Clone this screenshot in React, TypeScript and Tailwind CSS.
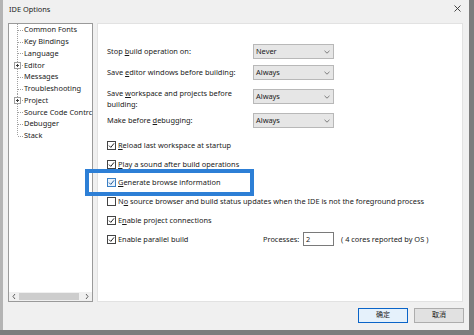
import type { ReactNode } from 'react';

const treeItems = [
  { label: 'Common Fonts', plus: false },
  { label: 'Key Bindings', plus: false },
  { label: 'Language', plus: false },
  { label: 'Editor', plus: true },
  { label: 'Messages', plus: false },
  { label: 'Troubleshooting', plus: false },
  { label: 'Project', plus: true },
  { label: 'Source Code Contrc', plus: false },
  { label: 'Debugger', plus: false },
  { label: 'Stack', plus: false },
];

function TreeRow({ label, plus, last }: { label: string; plus: boolean; last: boolean }) {
  return (
    <div className="flex h-[11.75px] items-center">
      <svg width="15" height="12" viewBox="0 0 15 12" className="shrink-0">
        <line x1="8.5" y1="0" x2="8.5" y2={last ? 6 : 12} stroke="#a0a0a0" strokeDasharray="1 1" />
        <line x1="9" y1="6.5" x2="15" y2="6.5" stroke="#a0a0a0" strokeDasharray="1 1" />
        {plus && (
          <g>
            <rect x="5.5" y="3.5" width="6" height="6" fill="#fff" stroke="#a0a0a0" />
            <line x1="7" y1="6.5" x2="10" y2="6.5" stroke="#404040" />
            <line x1="8.5" y1="5" x2="8.5" y2="8" stroke="#404040" />
          </g>
        )}
      </svg>
      <span className="whitespace-nowrap text-[7.4px] text-[#1a1a1a]">{label}</span>
    </div>
  );
}

function Combo({ value }: { value: string }) {
  return (
    <div className="flex h-[15px] w-[81px] shrink-0 items-center justify-between border border-[#b8b8b8] bg-[#e6e6e6] pl-[2px] pr-[3px] text-[7.4px] text-[#1a1a1a]">
      <span>{value}</span>
      <svg width="6" height="4" viewBox="0 0 6 4">
        <path d="M0.5 0.8 L3 3.2 L5.5 0.8" fill="none" stroke="#707070" strokeWidth="0.9" />
      </svg>
    </div>
  );
}

function U({ children }: { children: ReactNode }) {
  return <span className="underline underline-offset-[1px]">{children}</span>;
}

function Check({ checked, focus }: { checked: boolean; focus?: boolean }) {
  return (
    <div
      className={`flex h-[9px] w-[9px] shrink-0 items-center justify-center border ${
        focus ? 'border-[#3a7fc4] bg-[#e8f2fc]' : 'border-[#444] bg-white'
      }`}
    >
      {checked && (
        <svg width="7" height="7" viewBox="0 0 7 7">
          <path d="M1 3.6 L2.8 5.4 L6 1.4" fill="none" stroke={focus ? '#2a5f9a' : '#222'} strokeWidth="1" />
        </svg>
      )}
    </div>
  );
}

function CheckRow({ checked, focus, children }: { checked: boolean; focus?: boolean; children: ReactNode }) {
  return (
    <div className="flex h-[18.8px] items-center gap-[2px]">
      <Check checked={checked} focus={focus} />
      <span className="whitespace-nowrap text-[7.4px] text-[#1a1a1a]">{children}</span>
    </div>
  );
}

export default function App() {
  return (
    <div
      className="flex h-[335px] w-[474px] bg-[#7d7d7d] pb-[5px] pr-[5px]"
      style={{ fontFamily: '"Noto Sans", "Noto Sans CJK SC", sans-serif' }}
    >
      <div className="flex w-[3px] bg-[#b4b4b4]" />
      <div className="flex flex-1 flex-col bg-[#f0f0f0]">
        {/* title bar */}
        <div className="flex h-[23px] items-center justify-between pl-[6px] pr-[8px]">
          <span className="mb-[4px] text-[7.4px] text-[#1a1a1a]">IDE Options</span>
          <svg width="7" height="7" viewBox="0 0 7 7" className="mb-[6px]">
            <path d="M0.5 0.5 L6.5 6.5 M6.5 0.5 L0.5 6.5" stroke="#333" strokeWidth="0.9" />
          </svg>
        </div>

        {/* body */}
        <div className="flex h-[279px] gap-[4px] pl-[5px] pr-[6px]">
          <div className="flex w-[85px] flex-col justify-between border border-[#9a9a9a] bg-white">
            <div className="flex flex-col">
              {treeItems.map((t, i) => (
                <TreeRow key={t.label} label={t.label} plus={t.plus} last={i === treeItems.length - 1} />
              ))}
            </div>
            <div className="flex h-[9px] items-center bg-[#f0f0f0]">
              <svg width="10" height="9" viewBox="0 0 10 9" className="shrink-0">
                <path d="M6 2 L4 4.5 L6 7" fill="none" stroke="#606060" strokeWidth="1" />
              </svg>
              <div className="h-[7px] w-[60px] bg-[#cdcdcd]" />
              <div className="flex-1" />
              <svg width="10" height="9" viewBox="0 0 10 9" className="shrink-0">
                <path d="M4 2 L6 4.5 L4 7" fill="none" stroke="#606060" strokeWidth="1" />
              </svg>
            </div>
          </div>

          <div className="relative flex flex-1 flex-col border border-[#e2e2e2] bg-white pl-[9px] pt-[20px]">
            <div className="flex h-[15px] items-center">
              <span className="w-[146px] text-[7.4px] text-[#1a1a1a]">
                Stop <U>b</U>uild operation on:
              </span>
              <Combo value="Never" />
            </div>
            <div className="mt-[6px] flex h-[15px] items-center">
              <span className="w-[146px] text-[7.4px] text-[#1a1a1a]">
                Save <U>e</U>ditor windows before building:
              </span>
              <Combo value="Always" />
            </div>
            <div className="mt-[8px] flex h-[22px] items-start">
              <span className="w-[146px] text-[7.4px] leading-[11px] text-[#1a1a1a]">
                Save <U>w</U>orkspace and projects before
                <br />
                building:
              </span>
              <div className="mt-[1px]">
                <Combo value="Always" />
              </div>
            </div>
            <div className="mt-[3px] flex h-[15px] items-center">
              <span className="w-[146px] text-[7.4px] text-[#1a1a1a]">
                Make before <U>d</U>ebugging:
              </span>
              <Combo value="Always" />
            </div>

            <div className="mt-[8px] flex flex-col">
              <CheckRow checked>
                <U>R</U>eload last workspace at startup
              </CheckRow>
              <CheckRow checked>
                <U>P</U>lay a sound after build operations
              </CheckRow>
              <CheckRow checked focus>
                <U>G</U>enerate browse information
              </CheckRow>
              <CheckRow checked={false}>
                N<U>o</U> source browser and build status updates when the IDE is not the foreground process
              </CheckRow>
              <CheckRow checked>
                E<U>n</U>able project connections
              </CheckRow>
              <div className="flex h-[18.8px] items-center">
                <div className="flex w-[156px] items-center gap-[2px]">
                  <Check checked />
                  <span className="whitespace-nowrap text-[7.4px] text-[#1a1a1a]">Enable parallel build</span>
                </div>
                <span className="w-[40px] text-[7.4px] text-[#1a1a1a]">Processes:</span>
                <div className="flex h-[14px] w-[31px] items-center border border-[#7a7a7a] bg-white pl-[2px] text-[7.4px] text-[#1a1a1a]">
                  2
                </div>
                <span className="ml-[7px] whitespace-nowrap text-[7.4px] text-[#1a1a1a]">( 4 cores reported by OS )</span>
              </div>
            </div>

            {/* highlight box */}
            <div className="absolute left-[-13px] top-[145px] h-[27px] w-[169px] border-[4px] border-[#2d7fd6]" />
          </div>
        </div>

        {/* footer */}
        <div className="flex flex-1 items-start justify-end gap-[6px] pr-[5px] pt-[6px]">
          <button
            type="button"
            className="flex h-[15px] w-[50px] items-center justify-center border border-[#0a64c8] bg-[#e5f1fb] text-[7px] text-[#1a1a1a]"
          >
            确定
          </button>
          <button
            type="button"
            className="flex h-[15px] w-[50px] items-center justify-center border border-[#adadad] bg-[#e1e1e1] text-[7px] text-[#1a1a1a]"
          >
            取消
          </button>
        </div>
      </div>
    </div>
  );
}
